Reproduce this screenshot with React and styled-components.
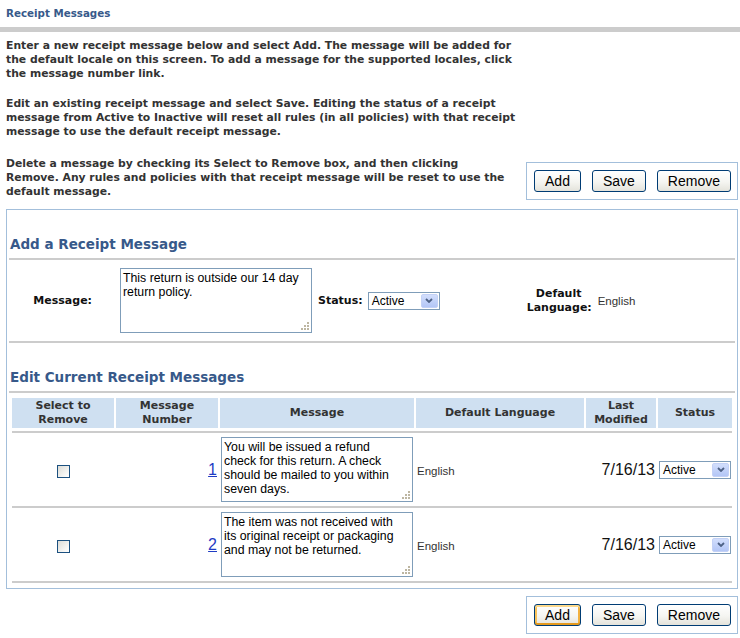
import React from 'react';
import styled, { createGlobalStyle } from 'styled-components';

const GlobalStyle = createGlobalStyle`
  html, body {
    margin: 0;
    padding: 0;
    background: #fff;
  }
  body {
    font-family: "DejaVu Sans", Verdana, sans-serif;
  }
`;

const Page = styled.div`
  width: 740px;
  box-sizing: border-box;
  padding: 0 2px 0 6px;
`;

const Title = styled.h1`
  margin: 0 0 7px;
  padding-top: 6px;
  font: bold 10.3px/14px "DejaVu Sans", Verdana, sans-serif;
  color: #37598a;
`;

const TitleBar = styled.div`
  height: 5px;
  margin: 0 -2px 0 -6px;
  background: #cccccc;
`;

const Intro = styled.p`
  margin: ${({ $top }) => $top}px 0 0;
  font: bold 10.8px/14px "DejaVu Sans", Verdana, sans-serif;
  color: #333;
  white-space: nowrap;
`;

const IntroRow = styled.div`
  display: flex;
  align-items: flex-start;
  margin-top: 16px;
`;

const ButtonBox = styled.div`
  display: flex;
  gap: 11px;
  width: fit-content;
  margin: ${({ $top }) => $top}px 0 0 auto;
  padding: 7px 6px 7px 7px;
  border: 1px solid #a3bfdb;
`;

const Button = styled.button`
  height: 22px;
  padding: 0 10px;
  border: 1px solid #003c74;
  border-radius: 3px;
  background: linear-gradient(#ffffff, #f5f5f1 55%, #e4e3db);
  font: 14px/20px "Liberation Sans", Arial, sans-serif;
  color: #000;
  box-shadow: ${({ $focused }) =>
    $focused
      ? 'inset 0 2px 0 #fcd98c, inset 0 -2px 0 #e59a1e, inset 2px 0 0 #f8c25a, inset -2px 0 0 #f3b13e'
      : 'none'};
`;

const Panel = styled.div`
  margin-top: 9px;
  padding: 0 2px 2px;
  border: 1px solid #a3bfdb;
`;

const SectionTitle = styled.h2`
  margin: 25px 0 0 1px;
  font: bold 13.5px/18px "DejaVu Sans", Verdana, sans-serif;
  color: #37598a;
`;

const Rule = styled.div`
  height: 2px;
  margin-top: ${({ $top }) => $top}px;
  background: #cccccc;
`;

const AddRow = styled.div`
  display: flex;
  align-items: center;
  margin-top: 8px;
`;

const Label = styled.div`
  width: ${({ $w }) => ($w ? `${$w}px` : 'auto')};
  margin-left: ${({ $left }) => $left || 0}px;
  text-align: ${({ $align }) => $align || 'left'};
  font: bold 11px/14px "DejaVu Sans", Verdana, sans-serif;
  color: #111;
`;

const Plain = styled.span`
  margin-left: ${({ $left }) => $left || 0}px;
  font: 11.5px/14px "Liberation Sans", Arial, sans-serif;
  color: #333;
`;

const TextBox = styled.div`
  position: relative;
  width: 192px;
  height: 65px;
  box-sizing: border-box;
  margin-left: ${({ $left }) => $left || 0}px;
  padding: 2px 2px 0 2px;
  border: 1px solid #7f9db9;
  background: #fff;
  font: 12.3px/14px "Liberation Sans", Arial, sans-serif;
  color: #000;
  white-space: nowrap;
  text-align: left;
`;

const Grip = styled.svg`
  position: absolute;
  right: 2px;
  bottom: 2px;
`;

const SelectBox = styled.div`
  display: flex;
  align-items: center;
  width: 72px;
  height: 18px;
  box-sizing: border-box;
  margin-left: ${({ $left }) => $left || 0}px;
  padding: 1px 1px 1px 3px;
  border: 1px solid #7f9db9;
  background: #fff;
  font: 12px/14px "Liberation Sans", Arial, sans-serif;
  color: #000;
  text-align: left;
`;

const SelectText = styled.span`
  flex: 1;
`;

const SelectArrow = styled.span`
  display: flex;
  align-items: center;
  justify-content: center;
  width: 17px;
  height: 14px;
  box-sizing: border-box;
  border: 1px solid #c3d1f6;
  border-radius: 2px;
  background: linear-gradient(#d2defc, #b3c6f6);
`;

const Grid = styled.table`
  width: 724px;
  margin: 3px 0 0 1px;
  border-spacing: 2px;
  table-layout: fixed;
`;

const HeadCell = styled.th`
  width: ${({ $w }) => $w}px;
  height: 30px;
  padding: 0;
  background: #cfe0f1;
  font: bold 11px/14px "DejaVu Sans", Verdana, sans-serif;
  color: #333;
  text-align: center;
  vertical-align: middle;
`;

const SepCell = styled.td`
  height: 4px;
  padding: 1px 0;
  box-sizing: border-box;
`;

const SepLine = styled.div`
  height: 2px;
  background: #cccccc;
`;

const Cell = styled.td`
  height: 67px;
  padding: 1px;
  box-sizing: border-box;
  text-align: ${({ $align }) => $align || 'left'};
  vertical-align: middle;
  font: 16px/18px "Liberation Sans", Arial, sans-serif;
  color: #111;
`;

const Check = styled.span`
  display: inline-block;
  width: 13px;
  height: 13px;
  box-sizing: border-box;
  margin-top: 2px;
  border: 1px solid #1c5180;
  background: linear-gradient(135deg, #dcdcd6, #f6f6f4 70%, #ffffff);
  vertical-align: middle;
`;

const NumberLink = styled.a`
  color: #1f3cc4;
  text-decoration: underline;
  font: 16px/18px "Liberation Sans", Arial, sans-serif;
`;

const ResizeGrip = () => (
  <Grip width="8" height="8" viewBox="0 0 8 8">
    {[
      [6, 0],
      [3, 3],
      [6, 3],
      [0, 6],
      [3, 6],
      [6, 6],
    ].map(([x, y]) => (
      <rect key={`${x}-${y}`} x={x} y={y} width="2" height="2" fill="#bdb6a2" />
    ))}
  </Grip>
);

const MessageBox = ({ lines, left }) => (
  <TextBox $left={left}>
    {lines.map((line, i) => (
      <div key={i}>{line}</div>
    ))}
    <ResizeGrip />
  </TextBox>
);

const StatusSelect = ({ left }) => (
  <SelectBox $left={left}>
    <SelectText>Active</SelectText>
    <SelectArrow>
      <svg width="8" height="5" viewBox="0 0 8 5">
        <path d="M1 1 L4 4 L7 1" fill="none" stroke="#4d6185" strokeWidth="1.8" />
      </svg>
    </SelectArrow>
  </SelectBox>
);

const Actions = ({ top, focusAdd }) => (
  <ButtonBox $top={top}>
    <Button $focused={focusAdd}>Add</Button>
    <Button>Save</Button>
    <Button>Remove</Button>
  </ButtonBox>
);

const messages = [
  {
    id: 1,
    lines: [
      'You will be issued a refund',
      'check for this return. A check',
      'should be mailed to you within',
      'seven days.',
    ],
  },
  {
    id: 2,
    lines: [
      'The item was not received with',
      'its original receipt or packaging',
      'and may not be returned.',
    ],
  },
];

const columns = [
  { w: 102, label: ['Select to', 'Remove'] },
  { w: 102, label: ['Message', 'Number'] },
  { w: 194, label: ['Message'] },
  { w: 168, label: ['Default Language'] },
  { w: 70, label: ['Last', 'Modified'] },
  { w: 74, label: ['Status'] },
];

const Separator = () => (
  <tr>
    <SepCell colSpan={6}>
      <SepLine />
    </SepCell>
  </tr>
);

export default function App() {
  return (
    <Page>
      <GlobalStyle />
      <Title>Receipt Messages</Title>
      <TitleBar />

      <Intro $top={7}>
        Enter a new receipt message below and select Add. The message will be added for
        <br />
        the default locale on this screen. To add a message for the supported locales, click
        <br />
        the message number link.
      </Intro>
      <Intro $top={16}>
        Edit an existing receipt message and select Save. Editing the status of a receipt
        <br />
        message from Active to Inactive will reset all rules (in all policies) with that receipt
        <br />
        message to use the default receipt message.
      </Intro>
      <IntroRow>
        <Intro $top={2}>
          Delete a message by checking its Select to Remove box, and then clicking
          <br />
          Remove. Any rules and policies with that receipt message will be reset to use the
          <br />
          default message.
        </Intro>
        <Actions top={7} />
      </IntroRow>

      <Panel>
        <SectionTitle>Add a Receipt Message</SectionTitle>
        <Rule $top={5} />
        <AddRow>
          <Label $w={83} $align="right">Message:</Label>
          <MessageBox left={28} lines={['This return is outside our 14 day', 'return policy.']} />
          <Label $left={6}>Status:</Label>
          <StatusSelect left={5} />
          <Label $w={64} $left={87} $align="center">
            Default
            <br />
            Language:
          </Label>
          <Plain $left={7}>English</Plain>
        </AddRow>
        <Rule $top={8} />

        <SectionTitle>Edit Current Receipt Messages</SectionTitle>
        <Rule $top={5} />
        <Grid>
          <thead>
            <tr>
              {columns.map((col) => (
                <HeadCell key={col.label.join(' ')} $w={col.w}>
                  {col.label.map((part, i) => (
                    <div key={i}>{part}</div>
                  ))}
                </HeadCell>
              ))}
            </tr>
          </thead>
          <tbody>
            <Separator />
            {messages.map((msg) => (
              <React.Fragment key={msg.id}>
                <tr>
                  <Cell $align="center">
                    <Check />
                  </Cell>
                  <Cell $align="right">
                    <NumberLink href="#">{msg.id}</NumberLink>
                  </Cell>
                  <Cell>
                    <MessageBox lines={msg.lines} />
                  </Cell>
                  <Cell>
                    <Plain>English</Plain>
                  </Cell>
                  <Cell $align="right">7/16/13</Cell>
                  <Cell>
                    <StatusSelect />
                  </Cell>
                </tr>
                <Separator />
              </React.Fragment>
            ))}
          </tbody>
        </Grid>
      </Panel>

      <Actions top={7} focusAdd />
    </Page>
  );
}
